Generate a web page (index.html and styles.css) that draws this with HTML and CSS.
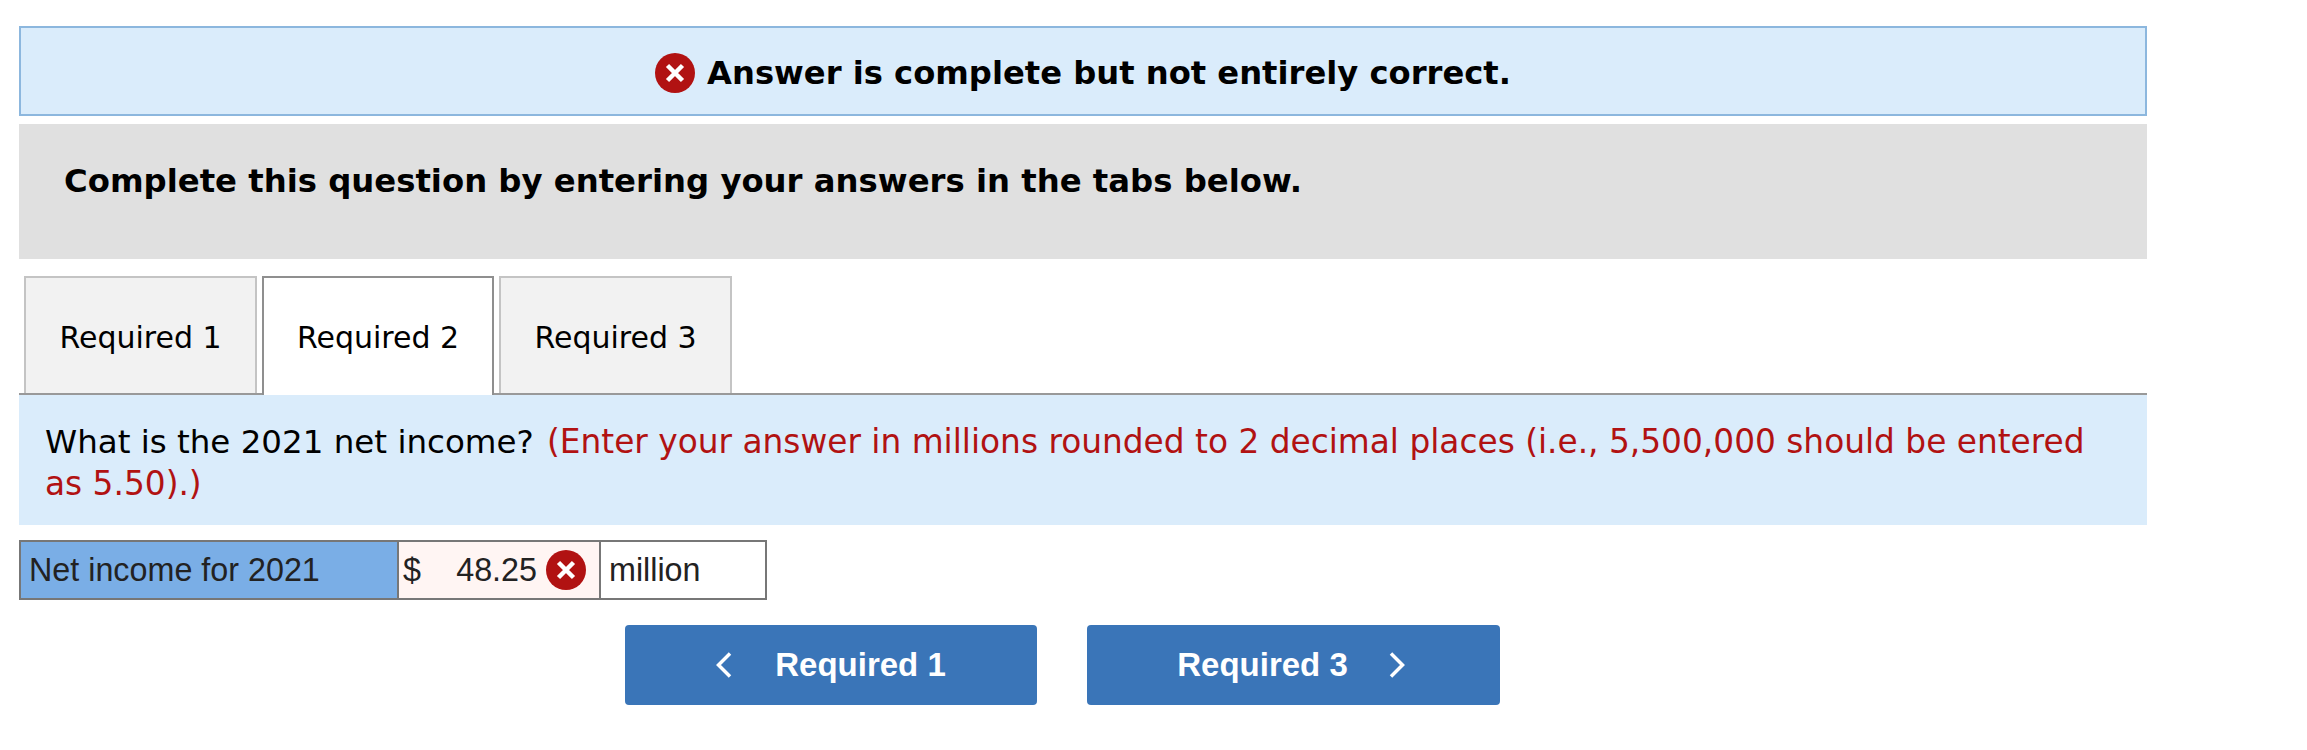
FILE: index.html
```html
<!DOCTYPE html>
<html lang="en">
<head>
  <meta charset="UTF-8">
  <title>Required 2</title>
  <link rel="stylesheet" href="styles.css">
</head>
<body>
  <div class="container">
    <div class="result-banner">
      <svg class="x-icon" viewBox="0 0 40 40"><circle cx="20" cy="20" r="20" fill="#b11212"/><path d="M12.5 12.5 27.5 27.5M27.5 12.5 12.5 27.5" stroke="#fff" stroke-width="4.5"/></svg>
      <span>Answer is complete but not entirely correct.</span>
    </div>
    <div class="instructions">Complete this question by entering your answers in the tabs below.</div>

    <div class="tabs">
      <div class="tab">Required 1</div>
      <div class="tab active">Required 2</div>
      <div class="tab">Required 3</div>
    </div>

    <div class="question">
      What is the 2021 net income? <span class="hint">(Enter your answer in millions rounded to 2 decimal places (i.e., 5,500,000 should be entered as 5.50).)</span>
    </div>

    <div class="answer-row">
      <div class="answer-label">Net income for 2021</div>
      <div class="answer-input">
        <span>$</span>
        <span class="answer-value">48.25</span>
        <svg class="x-icon" viewBox="0 0 40 40"><circle cx="20" cy="20" r="20" fill="#b11212"/><path d="M12.5 12.5 27.5 27.5M27.5 12.5 12.5 27.5" stroke="#fff" stroke-width="4.5"/></svg>
      </div>
      <div class="answer-unit">million</div>
    </div>

    <div class="nav">
      <a class="nav-button prev" href="#">
        <svg class="chevron" viewBox="0 0 16 26"><path d="M14 1.5 2.5 13 14 24.5" fill="none" stroke="#fff" stroke-width="3.5"/></svg>
        <span>Required 1</span>
      </a>
      <a class="nav-button next" href="#">
        <span>Required 3</span>
        <svg class="chevron" viewBox="0 0 16 26"><path d="M2 1.5 13.5 13 2 24.5" fill="none" stroke="#fff" stroke-width="3.5"/></svg>
      </a>
    </div>
  </div>
</body>
</html>
```

FILE: styles.css
```css
body {
  margin: 0;
  padding: 26px 0 0 19px;
  background-color: white;
  color: black;
  font-family: "DejaVu Sans", Verdana, sans-serif;
}
.container {
  width: 2128px;
}
.x-icon {
  width: 40px;
  height: 40px;
  flex: none;
}
.result-banner {
  display: flex;
  justify-content: center;
  align-items: center;
  gap: 12px;
  box-sizing: border-box;
  height: 90px;
  padding: 4px 0 0 0;
  background-color: #daecfb;
  border: 2px solid #8cb7de;
  font-size: 32.2px;
  font-weight: bold;
}
.instructions {
  box-sizing: border-box;
  height: 135px;
  margin-top: 8px;
  padding: 35px 45px;
  background-color: #e0e0e0;
  font-size: 32.3px;
  font-weight: bold;
  line-height: 44px;
}
.tabs {
  display: flex;
  gap: 5px;
  height: 119px;
  box-sizing: border-box;
  margin-top: 17px;
  padding-left: 5px;
  border-bottom: 2px solid #999;
}
.tab {
  box-sizing: border-box;
  width: 233px;
  height: 117px;
  padding-top: 4px;
  display: flex;
  justify-content: center;
  align-items: center;
  background-color: #f2f2f2;
  border: 2px solid #c4c4c4;
  border-bottom: none;
  font-size: 30px;
}
.tab.active {
  width: 232px;
  height: 119px;
  padding-top: 2px;
  background-color: white;
  border-color: #8f8f8f;
}
.question {
  box-sizing: border-box;
  height: 130px;
  padding: 26px 50px 26px 26px;
  background-color: #daecfb;
  font-size: 32.5px;
  line-height: 42px;
}
.hint {
  margin-left: 3px;
  color: #b11212;
  font-size: 32.8px;
}
.answer-row {
  display: flex;
  box-sizing: border-box;
  width: 748px;
  height: 60px;
  margin-top: 15px;
  border: 2px solid #777;
  font-family: "Liberation Sans", Arial, sans-serif;
  font-size: 32.3px;
  color: #222;
}
.answer-label {
  box-sizing: border-box;
  width: 378px;
  padding-left: 8px;
  border-right: 2px solid #777;
  background-color: #7aaee6;
  line-height: 56px;
}
.answer-input {
  box-sizing: border-box;
  width: 202px;
  display: flex;
  align-items: center;
  padding: 0 13px 0 4px;
  border-right: 2px solid #777;
  background-color: #fff5f3;
}
.answer-value {
  margin-left: auto;
  margin-right: 9px;
}
.answer-unit {
  flex: 1;
  padding-left: 8px;
  line-height: 56px;
}
.nav {
  display: flex;
  gap: 50px;
  margin-top: 25px;
  padding-left: 606px;
}
.nav-button {
  box-sizing: border-box;
  width: 413px;
  height: 80px;
  display: flex;
  justify-content: center;
  align-items: center;
  gap: 43px;
  background-color: #3a75b8;
  border-radius: 4px;
  color: white;
  font-family: "Liberation Sans", Arial, sans-serif;
  font-size: 33px;
  font-weight: bold;
  text-decoration: none;
}
.nav-button.prev {
  width: 412px;
}
.nav-button.next {
  gap: 41px;
  padding-right: 5px;
}
.chevron {
  width: 16px;
  height: 26px;
}
```
